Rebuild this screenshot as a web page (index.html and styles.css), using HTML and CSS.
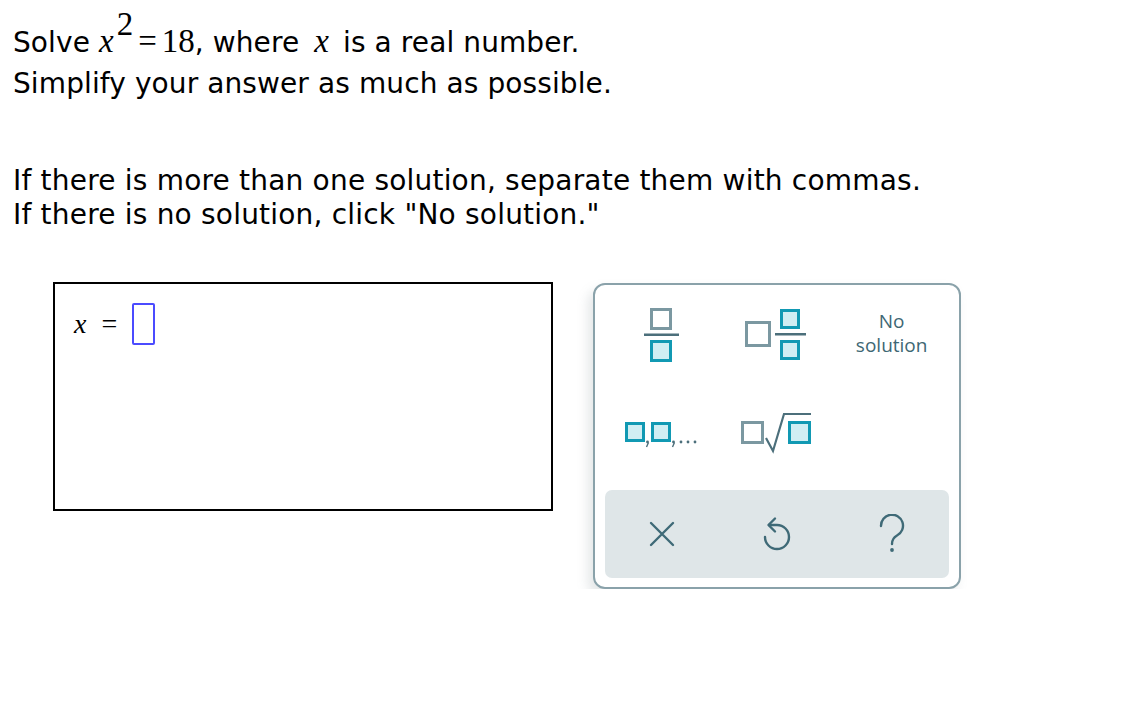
FILE: index.html
```html
<!DOCTYPE html>
<html>
<head>
<meta charset="utf-8">
<link rel="stylesheet" href="styles.css">
</head>
<body>
<div class="page">
  <div class="prompt">
    <p class="line">Solve <span class="math"><span class="mx">x</span><span class="sup">2</span><span class="eq">=</span>18</span>, where <span class="mvar">x</span> is a real number.</p>
    <p class="line">Simplify your answer as much as possible.</p>
  </div>
  <div class="instr">
    <p class="iline">If there is more than one solution, separate them with commas.</p>
    <p class="iline">If there is no solution, click "No solution."</p>
  </div>
  <div class="work">
    <div class="answer">
      <div class="ans-row">
        <span class="ax">x</span><span class="aeq">=</span><span class="slot"></span>
      </div>
    </div>
    <div class="pad">
      <div class="keys">
        <div class="key">
          <svg width="40" height="56" viewBox="0 0 40 56">
            <rect x="9.5" y="1.5" width="19" height="19" fill="#fff" stroke="#7b98a1" stroke-width="3"/>
            <rect x="2" y="25.5" width="35" height="2.5" fill="#4c6f7b"/>
            <rect x="9.5" y="33.5" width="19" height="19" fill="#d0eef3" stroke="#1199b3" stroke-width="3"/>
          </svg>
        </div>
        <div class="key">
          <svg width="64" height="54" viewBox="0 0 64 54">
            <rect x="1.5" y="13.5" width="23" height="23" fill="#fff" stroke="#7b98a1" stroke-width="3"/>
            <rect x="30" y="24" width="31" height="2.5" fill="#4c6f7b"/>
            <rect x="36.5" y="1.5" width="17" height="17" fill="#d0eef3" stroke="#1199b3" stroke-width="3"/>
            <rect x="36.5" y="32.5" width="17" height="17" fill="#d0eef3" stroke="#1199b3" stroke-width="3"/>
          </svg>
        </div>
        <div class="key key-text">No<br>solution</div>
        <div class="key key-low">
          <svg width="74" height="36" viewBox="0 0 74 36">
            <rect x="1.5" y="4.5" width="17" height="17" fill="#d0eef3" stroke="#1199b3" stroke-width="3"/>
            <circle cx="22.5" cy="23" r="1.4" fill="#4c6f7b"/>
            <path d="M23.5 23.5 L21.5 28" stroke="#4c6f7b" stroke-width="1.4" fill="none"/>
            <rect x="27.5" y="4.5" width="17" height="17" fill="#d0eef3" stroke="#1199b3" stroke-width="3"/>
            <circle cx="48.5" cy="23" r="1.4" fill="#4c6f7b"/>
            <path d="M49.5 23.5 L47.5 28" stroke="#4c6f7b" stroke-width="1.4" fill="none"/>
            <circle cx="56" cy="23" r="1.4" fill="#4c6f7b"/>
            <circle cx="63" cy="23" r="1.4" fill="#4c6f7b"/>
            <circle cx="70" cy="23" r="1.4" fill="#4c6f7b"/>
          </svg>
        </div>
        <div class="key">
          <svg width="72" height="44" viewBox="0 0 72 44">
            <rect x="1.5" y="10.5" width="20" height="20" fill="#fff" stroke="#7b98a1" stroke-width="3"/>
            <path d="M25 26 L32 39 L43 2 L70 2" stroke="#4c6f7b" stroke-width="2.2" fill="none" stroke-linejoin="miter"/>
            <rect x="48.5" y="10.5" width="20" height="20" fill="#d0eef3" stroke="#1199b3" stroke-width="3"/>
          </svg>
        </div>
        <div class="key"></div>
      </div>
      <div class="bar">
        <div class="bkey">
          <svg width="26" height="26" viewBox="0 0 26 26">
            <path d="M2 2 L24 24 M24 2 L2 24" stroke="#3f6a77" stroke-width="2.4" stroke-linecap="round"/>
          </svg>
        </div>
        <div class="bkey">
          <svg width="30" height="36" viewBox="0 0 30 36">
            <path d="M3 21 A12 12 0 1 0 15 9 L7 9" stroke="#3f6a77" stroke-width="2.4" fill="none" stroke-linecap="round"/>
            <path d="M13 2.5 L6.5 9 L13 15.5" stroke="#3f6a77" stroke-width="2.4" fill="none" stroke-linecap="round" stroke-linejoin="round"/>
          </svg>
        </div>
        <div class="bkey">
          <svg width="28" height="40" viewBox="0 0 28 40">
            <path d="M3 12 A11 11 0 1 1 19 21.5 C15.5 23.5 14 26 14 30" stroke="#3f6a77" stroke-width="2.4" fill="none" stroke-linecap="round"/>
            <circle cx="14" cy="36" r="1.9" fill="#3f6a77"/>
          </svg>
        </div>
      </div>
    </div>
  </div>
</div>
</body>
</html>
```

FILE: styles.css
```css
* { box-sizing: border-box; }
html, body { margin: 0; padding: 0; background: #fff; }
body {
  font-family: "DejaVu Sans", Verdana, sans-serif;
  color: #000;
}
.page {
  padding: 22px 0 0 13px;
}
.prompt {
  font-size: 28px;
  letter-spacing: 0.1px;
}
.line { margin: 0; line-height: 41px; }
.math {
  font-family: "Liberation Serif", "Times New Roman", serif;
  font-size: 33px;
  line-height: 1;
  letter-spacing: 0;
}
.mx {
  font-style: italic;
}
.sup {
  position: relative;
  top: -17px;
  margin-left: 3px;
}
.eq { margin: 0 5px 0 5px; }
.mvar {
  font-family: "Liberation Serif", "Times New Roman", serif;
  font-style: italic;
  font-size: 33px;
  line-height: 1;
  margin: 0 5px 0 6px;
}
.instr {
  margin-top: 60px;
  font-size: 28px;
  letter-spacing: 0.2px;
}
.iline { margin: 0; line-height: 34px; }
.work {
  margin-top: 50px;
  margin-left: 40px;
  display: flex;
  align-items: flex-start;
  gap: 40px;
}
.answer {
  width: 500px;
  height: 229px;
  border: 2px solid #000;
  padding: 19px 0 0 19px;
}
.ans-row {
  display: flex;
  align-items: center;
  height: 42px;
  font-family: "Liberation Serif", "Times New Roman", serif;
  font-size: 28px;
}
.ax { font-style: italic; }
.aeq { margin: 0 15px 0 15px; }
.slot {
  display: inline-block;
  width: 23px;
  height: 42px;
  border: 2px solid #4b4bff;
  border-radius: 2px;
}
.pad {
  margin-top: 1px;
  width: 368px;
  height: 306px;
  border: 2px solid #8aa2aa;
  border-radius: 12px;
  padding: 12px 10px 9px 10px;
  background: #fff;
  box-shadow: -5px 7px 12px rgba(120, 135, 140, 0.2);
}
.keys {
  display: grid;
  grid-template-columns: repeat(3, 1fr);
  grid-template-rows: 78px 78px;
  row-gap: 20px;
}
.key {
  display: flex;
  align-items: center;
  justify-content: center;
}
.key-low { padding-top: 6px; }
.key-text {
  font-family: "Open Sans", Lato, sans-serif;
  font-size: 19px;
  line-height: 24px;
  color: #3e6774;
  text-align: center;
  padding-bottom: 6px;
}
.bar {
  margin-top: 17px;
  height: 88px;
  background: #dfe6e8;
  border-radius: 7px;
  display: grid;
  grid-template-columns: repeat(3, 1fr);
}
.bkey {
  display: flex;
  align-items: center;
  justify-content: center;
}
```
